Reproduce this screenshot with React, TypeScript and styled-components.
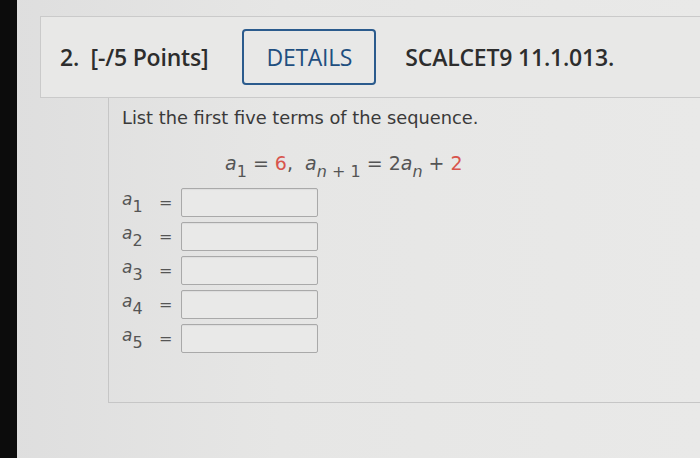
import React, { FC } from "react";
import styled, { createGlobalStyle } from "styled-components";

const GlobalStyle = createGlobalStyle`
  html, body {
    margin: 0;
    padding: 0;
    width: 700px;
    height: 458px;
    overflow: hidden;
    background: #e4e4e3;
  }
  * { box-sizing: border-box; }
`;

const Screen = styled.div`
  display: flex;
  width: 700px;
  height: 458px;
  background: linear-gradient(90deg, #dedede 0%, #e6e6e5 40%, #e9e9e8 100%);
  font-family: "Open Sans", "Noto Sans", sans-serif;
  color: #333;
`;

const Bezel = styled.div`
  width: 17px;
  flex-shrink: 0;
  background: #0c0c0c;
`;

const Page = styled.div`
  flex: 1;
  display: flex;
  flex-direction: column;
  padding: 16px 0 0 23px;
`;

const QuestionHeader = styled.div`
  display: flex;
  align-items: center;
  height: 82px;
  padding: 0 0 0 19px;
  border: 1px solid #cacaca;
  border-right: none;
  background: #e8e8e7;
`;

const HeaderText = styled.span<{ $gap?: number }>`
  font-size: 23px;
  font-weight: 600;
  color: #2d2d2d;
  letter-spacing: -0.2px;
  white-space: pre;
  margin-right: ${(p) => p.$gap ?? 0}px;
`;

const DetailsButton = styled.button`
  width: 134px;
  height: 56px;
  margin: 0 29px 0 0;
  padding: 0;
  border: 2px solid #2b5b8d;
  border-radius: 4px;
  background: transparent;
  font-family: "Open Sans", "Noto Sans", sans-serif;
  font-size: 23px;
  color: #1f4f80;
  letter-spacing: -0.3px;
`;

const Body = styled.div`
  margin-left: 68px;
  height: 305px;
  border-left: 1px solid #c6c6c6;
  border-bottom: 1px solid #c6c6c6;
  padding: 8px 0 0 13px;
  display: flex;
  flex-direction: column;
`;

const Prompt = styled.p`
  margin: 0;
  font-family: "DejaVu Sans", Verdana, sans-serif;
  font-size: 17.8px;
  line-height: 24px;
  color: #3a3a3a;
`;

const Formula = styled.div`
  margin: 22px 0 0 103px;
  height: 36px;
  font-family: "DejaVu Sans", Verdana, sans-serif;
  font-size: 19px;
  line-height: 22px;
  color: #555;
  white-space: pre;
`;

const Var = styled.i`
  font-family: "DejaVu Sans", Verdana, sans-serif;
`;

const Sub = styled.sub`
  font-size: 16px;
  vertical-align: -7px;
  font-style: normal;
`;

const Given = styled.span`
  color: #d8544c;
`;

const Rows = styled.div`
  display: flex;
  flex-direction: column;
  gap: 5px;
`;

const Row = styled.div`
  display: flex;
  align-items: center;
  height: 29px;
`;

const Label = styled.span`
  width: 37px;
  font-family: "DejaVu Sans", sans-serif;
  font-size: 17px;
  color: #555;
  white-space: pre;
`;

const Eq = styled.span`
  width: 22px;
  font-family: "DejaVu Sans", sans-serif;
  font-size: 16px;
  color: #555;
`;

const AnswerBox = styled.input`
  width: 137px;
  height: 29px;
  border: 1px solid #a9a9a9;
  border-radius: 2px;
  background: #e9e9e8;
  box-shadow: inset 0 1px 1px rgba(0, 0, 0, 0.05);
`;

const Term: FC<{ n: number }> = ({ n }) => (
  <Row>
    <Label>
      <Var>a</Var>
      <Sub>{n}</Sub>
    </Label>
    <Eq>=</Eq>
    <AnswerBox />
  </Row>
);

export default function App() {
  return (
    <>
      <GlobalStyle />
      <Screen>
        <Bezel />
        <Page>
          <QuestionHeader>
            <HeaderText $gap={34}>{"2.  [-/5 Points]"}</HeaderText>
            <DetailsButton>DETAILS</DetailsButton>
            <HeaderText>SCALCET9 11.1.013.</HeaderText>
          </QuestionHeader>
          <Body>
            <Prompt>List the first five terms of the sequence.</Prompt>
            <Formula>
              <Var>a</Var>
              <Sub>1</Sub> = <Given>6</Given>,{"  "}
              <Var>a</Var>
              <Sub>
                <i>n</i> + 1
              </Sub>{" "}
              = 2<Var>a</Var>
              <Sub>
                <i>n</i>
              </Sub>{" "}
              + <Given>2</Given>
            </Formula>
            <Rows>
              {[1, 2, 3, 4, 5].map((n) => (
                <Term key={n} n={n} />
              ))}
            </Rows>
          </Body>
        </Page>
      </Screen>
    </>
  );
}
